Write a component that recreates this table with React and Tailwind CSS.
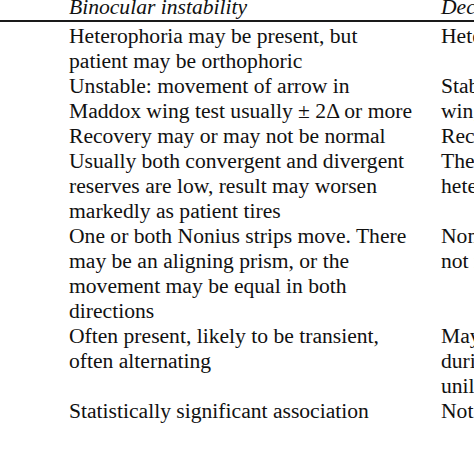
const rows = [
  {
    left: ["Heterophoria may be present, but", "patient may be orthophoric"],
    right: ["Heterophoria present"],
  },
  {
    left: ["Unstable: movement of arrow in", "Maddox wing test usually \u00b1 2\u0394 or more"],
    right: ["Stable: movement of arrow in Maddox", "wing test less than 2\u0394"],
  },
  {
    left: ["Recovery may or may not be normal"],
    right: ["Recovery usually reduced"],
  },
  {
    left: [
      "Usually both convergent and divergent",
      "reserves are low, result may worsen",
      "markedly as patient tires",
    ],
    right: ["The reserve opposing the", "heterophoria is low"],
  },
  {
    left: [
      "One or both Nonius strips move. There",
      "may be an aligning prism, or the",
      "movement may be equal in both",
      "directions",
    ],
    right: ["Nonius strips usually do", "not move"],
  },
  {
    left: ["Often present, likely to be transient,", "often alternating"],
    right: ["May be present, usually", "during near work, usually", "unilateral"],
  },
  {
    left: ["Statistically significant association"],
    right: ["Not associated"],
  },
];

function Cell({ lines, width }) {
  return (
    <div className={width}>
      {lines.map((line, i) => (
        <div key={i}>{line}</div>
      ))}
    </div>
  );
}

export default function App() {
  return (
    <main
      className="w-[474px] h-[474px] overflow-hidden bg-white text-[#111] text-[21.6px] leading-[25px] whitespace-nowrap"
      style={{ fontFamily: '"Liberation Serif", "Times New Roman", serif' }}
    >
      <div className="flex -mt-[5px] border-b-2 border-[#1a1a1a] italic">
        <div className="w-[69px] shrink-0" />
        <div className="w-[372px] shrink-0">Binocular instability</div>
        <div>Decompensated heterophoria</div>
      </div>

      <div className="pt-[2px]">
        {rows.map((row, i) => (
          <div key={i} className="flex">
            <div className="w-[69px] shrink-0" />
            <Cell lines={row.left} width="w-[372px] shrink-0" />
            <Cell lines={row.right} width="shrink-0" />
          </div>
        ))}
      </div>
    </main>
  );
}
